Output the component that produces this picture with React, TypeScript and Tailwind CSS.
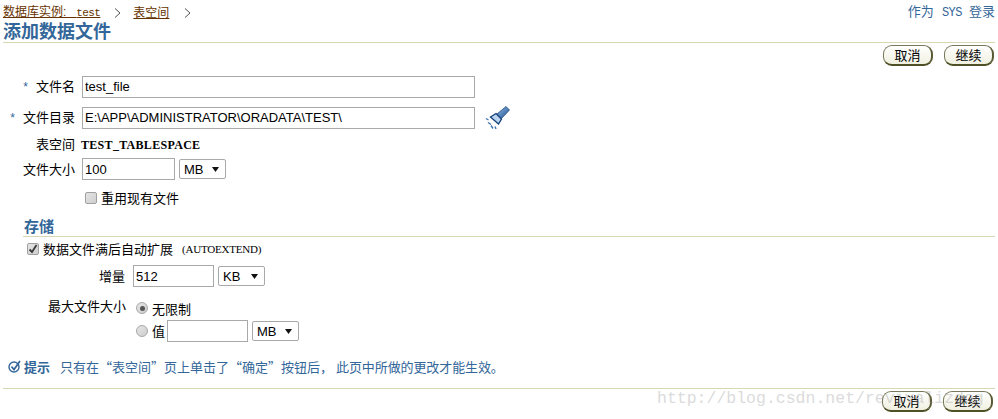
import React from "react";

const Button = ({ text }: { text: string }) => (
    <button className="w-[50px] h-[21px] rounded-[9px] border border-[#77785a] border-b-2 border-r-2 border-b-[#4f5026] border-r-[#5a5b35] bg-gradient-to-b from-[#ffffff] to-[#f0f0e0] text-[13px] leading-none text-black">
        {text}
    </button>
);

const Buttons = ({ right }: { right: string }) => (
    <div className={`flex justify-end gap-[11px] ${right}`}>
        <Button text="取消" />
        <Button text="继续" />
    </div>
);

const Rule = ({ className = "" }: { className?: string }) => <div className={`h-px bg-[#d6d8b2] ${className}`} />;

const Field = ({ value, width }: { value: string; width: string }) => (
    <input
        readOnly
        value={value}
        className={`${width} h-[22px] shrink-0 border border-[#a9a9a9] bg-white px-[2px] text-[13px] font-['Liberation_Sans',sans-serif] text-black outline-none`}
    />
);

const Unit = ({ unit }: { unit: string }) => (
    <div className="flex w-[47px] h-[20px] shrink-0 items-center justify-between rounded-[2px] border border-[#a9a9a9] bg-white pl-[4px] pr-[6px] text-[13px] font-['Liberation_Sans',sans-serif] text-black">
        <span>{unit}</span>
        <svg width="7" height="5" viewBox="0 0 7 5"><path d="M0 0h7L3.5 5z" fill="#111" /></svg>
    </div>
);

const Check = ({ checked }: { checked?: boolean }) => (
    <div className="flex w-[12px] h-[12px] shrink-0 items-center justify-center rounded-[2px] border border-[#a0a0a0] bg-gradient-to-br from-[#e4e4e4] to-[#cfcfcf]">
        {checked && (
            <svg width="10" height="10" viewBox="0 0 10 10"><path d="M1.5 5.5 4 8l4.5-7" fill="none" stroke="#3a3a3a" strokeWidth="1.8" /></svg>
        )}
    </div>
);

const Radio = ({ checked }: { checked?: boolean }) => (
    <div className="flex w-[12px] h-[12px] shrink-0 items-center justify-center rounded-full border border-[#a8a8a8] bg-gradient-to-br from-[#e6e6e6] to-[#cdcdcd]">
        {checked && <div className="w-[5px] h-[5px] rounded-full bg-[#555]" />}
    </div>
);

const Star = () => <span className="mr-[8px] text-[12px] leading-none font-['Liberation_Sans',sans-serif] text-[#336699]">*</span>;

const Row = ({ label, star, height, children }: { label: string; star?: boolean; height: string; children: React.ReactNode }) => (
    <div className={`flex items-center ${height}`}>
        <div className="flex w-[75px] shrink-0 items-center justify-end text-[13px] text-black">
            {star && <Star />}
            <span>{label}</span>
        </div>
        <div className="ml-[7px] flex items-center gap-[4px]">{children}</div>
    </div>
);

const Flashlight = () => (
    <svg width="26" height="25" viewBox="0 0 26 25" className="ml-[6px]">
        <defs>
            <linearGradient id="torch" x1="0" y1="0" x2="1" y2="1">
                <stop offset="0" stopColor="#8db8e2" />
                <stop offset="1" stopColor="#1f4f8f" />
            </linearGradient>
        </defs>
        <path d="M12 9 21 1.5 24.5 5 16 14z" fill="url(#torch)" stroke="#1d4a82" strokeWidth="0.8" />
        <path d="M5.5 12 11 8.5 16.5 14 13.5 19z" fill="#b9d4ee" stroke="#163f78" strokeWidth="1.3" />
        <path d="M1 13.5 3.5 15M3 17.5 6 19.5M6 20.5 8 23.5M10 21.5 11 24" stroke="#3f75ae" strokeWidth="1.4" fill="none" />
    </svg>
);

const HintIcon = () => (
    <svg width="13" height="13" viewBox="0 0 13 13">
        <circle cx="6" cy="7" r="5" fill="none" stroke="#336699" strokeWidth="1.4" />
        <path d="M3.5 6.5 6 9.5 12 1" fill="none" stroke="#336699" strokeWidth="1.7" />
    </svg>
);

export default function App() {
    return (
        <div className="relative w-[998px] h-[419px] overflow-hidden bg-white font-['Liberation_Sans','Noto_Sans_CJK_SC',sans-serif] text-[13px] leading-none">
            <div className="flex h-[21px] items-end justify-between pl-[3px] pr-[3px] pb-[2px]">
                <div className="flex items-center text-[12px] text-[#663300]">
                    <a className="underline whitespace-pre">数据库实例:   <span className="font-['Liberation_Mono',monospace] text-[11px] tracking-[-0.6px]">test</span></a>
                    <svg width="7" height="10" viewBox="0 0 7 10" className="ml-[14px]"><path d="M1 .5 6 5 1 9.5" fill="none" stroke="#555" /></svg>
                    <a className="ml-[12px] underline">表空间</a>
                    <svg width="7" height="10" viewBox="0 0 7 10" className="ml-[15px]"><path d="M1 .5 6 5 1 9.5" fill="none" stroke="#555" /></svg>
                </div>
                <div className="flex items-baseline text-[13px] text-[#336699]">
                    <span>作为</span>
                    <span className="ml-[8px] mr-[7px] font-['Liberation_Mono',monospace] text-[12px] tracking-[-0.5px]">SYS</span>
                    <span>登录</span>
                </div>
            </div>
            <div className="flex h-[20px] items-center pl-[3px] pt-[2px] text-[18px] font-bold text-[#336699]">添加数据文件</div>
            <Rule className="mx-[3px] mt-[1px]" />
            <div className="mt-[2px]">
                <Buttons right="pr-[4px]" />
            </div>

            <div className="mt-[9px] flex flex-col">
                <Row label="文件名" star height="h-[23px]">
                    <Field value="test_file" width="w-[393px]" />
                </Row>
                <Row label="文件目录" star height="h-[23px] mt-[8px]">
                    <Field value="E:\APP\ADMINISTRATOR\ORADATA\TEST\" width="w-[393px]" />
                    <Flashlight />
                </Row>
                <Row label="表空间" height="h-[17px] mt-[7px]">
                    <span className="-ml-[1px] font-['Liberation_Serif',serif] text-[12px] font-bold tracking-[0.3px] text-black">TEST_TABLESPACE</span>
                </Row>
                <Row label="文件大小" height="h-[22px] mt-[5px]">
                    <Field value="100" width="w-[93px]" />
                    <Unit unit="MB" />
                </Row>
                <div className="mt-[11px] flex h-[13px] items-center pl-[85px]">
                    <Check />
                    <span className="ml-[4px] pt-[2px] text-black">重用现有文件</span>
                </div>
                <div className="mt-[12px] flex h-[20px] items-center pl-[24px] text-[15px] font-bold text-[#336699]">存储</div>
                <Rule className="ml-[23px] mr-[3px]" />
                <div className="mt-[5px] flex h-[14px] items-center pl-[27px] text-black">
                    <Check checked />
                    <span className="ml-[4px]">数据文件满后自动扩展</span>
                    <span className="ml-[9px] font-['Liberation_Serif',serif] text-[11px] tracking-[-0.2px]">(AUTOEXTEND)</span>
                </div>
                <div className="mt-[9px] flex h-[22px] items-center">
                    <div className="w-[125px] shrink-0 text-right text-black">增量</div>
                    <div className="ml-[8px] flex items-center gap-[4px]">
                        <Field value="512" width="w-[81px]" />
                        <Unit unit="KB" />
                    </div>
                </div>
                <div className="mt-[15px] flex">
                    <div className="-mt-[2px] w-[126px] shrink-0 text-right text-black">最大文件大小</div>
                    <div className="ml-[10px] flex flex-col text-black">
                        <div className="flex h-[15px] items-start">
                            <Radio checked />
                            <span className="ml-[4px] pt-[1px]">无限制</span>
                        </div>
                        <div className="mt-[3px] flex h-[22px] items-center">
                            <Radio />
                            <span className="ml-[4px]">值</span>
                            <div className="ml-[2px] flex items-center gap-[4px]">
                                <Field value="" width="w-[81px]" />
                                <Unit unit="MB" />
                            </div>
                        </div>
                    </div>
                </div>
                <div className="mt-[17px] flex h-[14px] items-center pl-[8px] font-['Noto_Sans_CJK_SC',sans-serif] text-[#336699]">
                    <HintIcon />
                    <span className="ml-[3px] font-bold">提示</span>
                    <span className="ml-[10px] whitespace-pre">只有在“表空间”页上单击了“确定”按钮后，</span>
                    <span className="ml-[3px] whitespace-pre tracking-[-0.1px]">此页中所做的更改才能生效。</span>
                </div>
                <Rule className="mx-[3px] mt-[15px]" />
            </div>
            <div className="mt-[2px]">
                <Buttons right="pr-[5px]" />
            </div>
            <div className="pointer-events-none absolute left-[657px] top-[391px] whitespace-nowrap font-['Liberation_Mono',monospace] text-[16.5px] text-[#9a9a9a] opacity-35">
                http://blog.csdn.net/revivalizdog
            </div>
        </div>
    );
}
